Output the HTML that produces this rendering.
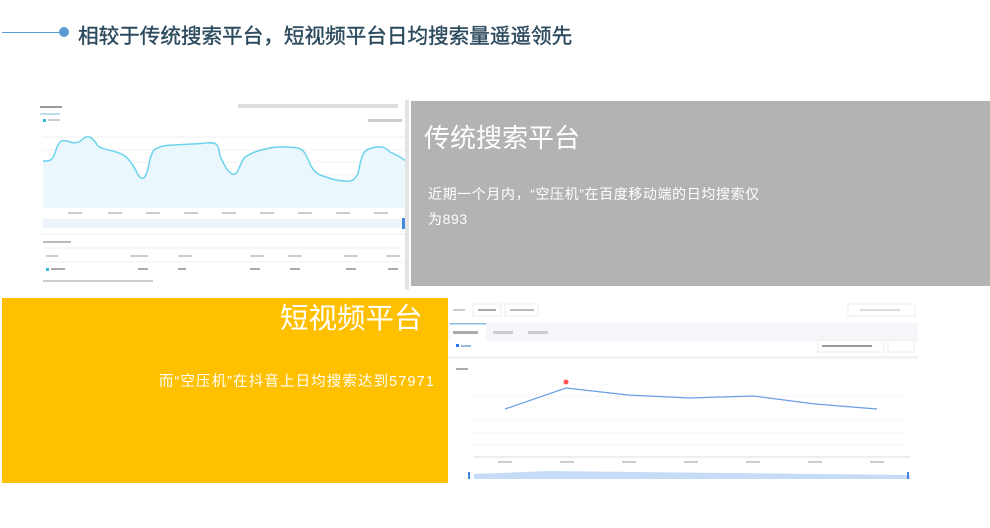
<!DOCTYPE html><html><head><meta charset="utf-8"><style>
body{margin:0;width:990px;height:528px;background:#fff;position:relative;overflow:hidden;font-family:"WenQuanYi Zen Hei","Liberation Sans",sans-serif}
.a{position:absolute}
</style></head><body>
<div class="a" style="left:2px;top:32px;width:58px;height:1px;background:#5b9bd5"></div>
<div class="a" style="left:59px;top:27px;width:10px;height:10px;border-radius:50%;background:#5b9bd5"></div>
<div class="a" style="left:78px;top:19px;font-size:20.6px;color:#2d4b5e;white-space:nowrap;font-family:'WenQuanYi Zen Hei',sans-serif;-webkit-text-stroke:0.4px #2d4b5e">相较于传统搜索平台，短视频平台日均搜索量遥遥领先</div>

<!-- left screenshot -->
<svg class="a" style="left:38px;top:100px" width="373" height="190" viewBox="0 0 373 190">
<rect width="373" height="190" fill="#fff"/>
<rect x="2" y="6" width="22" height="2" fill="#999"/><line x1="2" y1="14" x2="22" y2="14" stroke="#7bd" />
<rect x="200" y="4" width="160" height="4" fill="#ddd"/>
<rect x="5" y="19" width="3" height="3" fill="#3bd"/><rect x="10" y="19" width="12" height="2" fill="#ccc"/>
<rect x="330" y="19" width="34" height="3" fill="#ccc"/>
<g stroke="#f0f0f0"><line x1="5" y1="37" x2="369" y2="37"/><line x1="5" y1="50" x2="369" y2="50"/><line x1="5" y1="62" x2="369" y2="62"/><line x1="5" y1="75" x2="369" y2="75"/><line x1="5" y1="87" x2="369" y2="87"/><line x1="5" y1="100" x2="369" y2="100"/></g>
<path d="M5 61 C12 61 14 62 18 50 C22 38 26 40 32 42 C38 44 42 42 46 38 C52 34 56 40 60 46 C66 50 72 50 78 52 C86 54 90 58 94 64 C100 72 100 80 106 78 C112 70 110 58 116 50 C122 46 128 45 136 45 C150 44 160 44 168 43 C180 42 180 44 182 56 C186 64 188 70 194 74 C200 76 200 68 206 58 C214 52 222 50 232 48 C242 46 252 47 260 48 C266 50 268 54 272 64 C276 72 280 75 288 77 C296 80 298 80 306 81 C314 82 316 80 320 74 C324 52 326 50 334 48 C342 46 346 46 352 52 C358 55 362 56 369 62 L369 108 L5 108 Z" fill="#eaf7fc"/>
<path d="M5 61 C12 61 14 62 18 50 C22 38 26 40 32 42 C38 44 42 42 46 38 C52 34 56 40 60 46 C66 50 72 50 78 52 C86 54 90 58 94 64 C100 72 100 80 106 78 C112 70 110 58 116 50 C122 46 128 45 136 45 C150 44 160 44 168 43 C180 42 180 44 182 56 C186 64 188 70 194 74 C200 76 200 68 206 58 C214 52 222 50 232 48 C242 46 252 47 260 48 C266 50 268 54 272 64 C276 72 280 75 288 77 C296 80 298 80 306 81 C314 82 316 80 320 74 C324 52 326 50 334 48 C342 46 346 46 352 52 C358 55 362 56 369 62" fill="none" stroke="#6cd3ec" stroke-width="1.5"/>
<g fill="#ccc"><rect x="30" y="112" width="14" height="2"/><rect x="70" y="112" width="14" height="2"/><rect x="108" y="112" width="14" height="2"/><rect x="146" y="112" width="14" height="2"/><rect x="184" y="112" width="14" height="2"/><rect x="222" y="112" width="14" height="2"/><rect x="260" y="112" width="14" height="2"/><rect x="298" y="112" width="14" height="2"/><rect x="336" y="112" width="14" height="2"/></g>
<rect x="5" y="119" width="364" height="9" fill="#edf3fa"/><rect x="364" y="118" width="4" height="11" fill="#48d"/>
<line x1="2" y1="134" x2="370" y2="134" stroke="#eee"/>
<rect x="5" y="141" width="28" height="2" fill="#bbb"/>
<line x1="5" y1="148" x2="369" y2="148" stroke="#f0f0f0"/>
<rect x="8" y="155" width="12" height="2" fill="#ccc"/><rect x="92" y="155" width="18" height="2" fill="#ccc"/><rect x="140" y="155" width="14" height="2" fill="#ccc"/><rect x="212" y="155" width="14" height="2" fill="#ccc"/><rect x="250" y="155" width="14" height="2" fill="#ccc"/><rect x="306" y="155" width="14" height="2" fill="#ccc"/><rect x="348" y="155" width="14" height="2" fill="#ccc"/>
<line x1="5" y1="162" x2="369" y2="162" stroke="#f0f0f0"/>
<rect x="8" y="168" width="3" height="3" fill="#3bd"/><rect x="13" y="168" width="14" height="2" fill="#aaa"/>
<rect x="100" y="168" width="10" height="2" fill="#aaa"/><rect x="140" y="168" width="8" height="2" fill="#aaa"/>
<rect x="212" y="168" width="10" height="2" fill="#aaa"/><rect x="252" y="168" width="10" height="2" fill="#aaa"/><rect x="308" y="168" width="10" height="2" fill="#aaa"/><rect x="350" y="168" width="10" height="2" fill="#aaa"/>
<rect x="5" y="180" width="110" height="2" fill="#ccc"/>
<rect x="367" y="0" width="4" height="190" fill="#e4e4e4"/>
</svg>

<div class="a" style="left:411px;top:101px;width:579px;height:185px;background:#b3b3b3"></div>
<div class="a" style="left:424px;top:122px;font-size:26px;line-height:32px;color:#fff;white-space:nowrap">传统搜索平台</div>
<div class="a" style="left:428px;top:182px;font-size:14px;line-height:25px;color:#fff;white-space:nowrap;letter-spacing:0.6px">近期一个月内，“空压机”在百度移动端的日均搜索仅<br>为893</div>

<div class="a" style="left:2px;top:298px;width:446px;height:185px;background:#ffc000"></div>
<div class="a" style="left:280px;top:302px;font-size:28.5px;line-height:34px;color:#fff;white-space:nowrap">短视频平台</div>
<div class="a" style="right:555px;top:370px;font-size:14.5px;color:#fff;white-space:nowrap;letter-spacing:1.1px">而“空压机”在抖音上日均搜索达到57971</div>

<!-- right screenshot -->
<svg class="a" style="left:448px;top:298px" width="470" height="186" viewBox="0 0 470 186">
<rect width="470" height="186" fill="#fff"/>
<rect x="0" y="25" width="470" height="18" fill="#f4f6f9"/>
<rect x="2" y="25" width="36" height="18" fill="#fff"/><rect x="2" y="25" width="36" height="1.5" fill="#8bd"/>
<rect x="5" y="33" width="25" height="3" fill="#aaa"/><rect x="45" y="33" width="20" height="3" fill="#ccc"/><rect x="80" y="33" width="20" height="3" fill="#ccc"/>
<rect x="25" y="6" width="28" height="12" fill="none" stroke="#eee"/><rect x="57" y="6" width="33" height="12" fill="none" stroke="#eee"/>
<rect x="400" y="6" width="67" height="12" fill="none" stroke="#eee"/>
<rect x="5" y="11" width="12" height="2" fill="#ccc"/><rect x="30" y="11" width="18" height="2" fill="#aaa"/><rect x="62" y="11" width="24" height="2" fill="#bbb"/><rect x="412" y="11" width="40" height="2" fill="#ddd"/>
<rect x="8" y="46" width="3" height="3" fill="#27e"/><rect x="13" y="47" width="10" height="2" fill="#9bd"/>
<rect x="370" y="42" width="66" height="12" fill="none" stroke="#eee"/><rect x="374" y="47" width="50" height="2" fill="#999"/>
<rect x="440" y="42" width="26" height="12" fill="none" stroke="#eee"/>
<rect x="0" y="58" width="470" height="3" fill="#f3f3f3"/>
<rect x="8" y="70" width="12" height="2" fill="#aaa"/>
<g stroke="#eee" stroke-dasharray="2 2"><line x1="26" y1="86" x2="462" y2="86"/><line x1="26" y1="98" x2="462" y2="98"/><line x1="26" y1="110" x2="462" y2="110"/><line x1="26" y1="122" x2="462" y2="122"/><line x1="26" y1="135" x2="462" y2="135"/><line x1="26" y1="147" x2="462" y2="147"/></g>
<line x1="26" y1="159" x2="462" y2="159" stroke="#ddd"/>
<g fill="#ccc"><rect x="50" y="163" width="14" height="2"/><rect x="112" y="163" width="14" height="2"/><rect x="174" y="163" width="14" height="2"/><rect x="236" y="163" width="14" height="2"/><rect x="298" y="163" width="14" height="2"/><rect x="360" y="163" width="14" height="2"/><rect x="422" y="163" width="14" height="2"/></g>
<polyline points="57,111 118,90 180,97 242,100 305,98 367,106 429,111" fill="none" stroke="#6a9de6" stroke-width="1.2"/>
<circle cx="118" cy="84" r="2.5" fill="#f55"/>
<path d="M26 176 L100 173 L462 177 L462 181 L26 181 Z" fill="#c6dcf6"/>
<rect x="20" y="174" width="2" height="7" fill="#48d"/><rect x="459" y="174" width="2" height="7" fill="#48d"/>
</svg>
</body></html>
